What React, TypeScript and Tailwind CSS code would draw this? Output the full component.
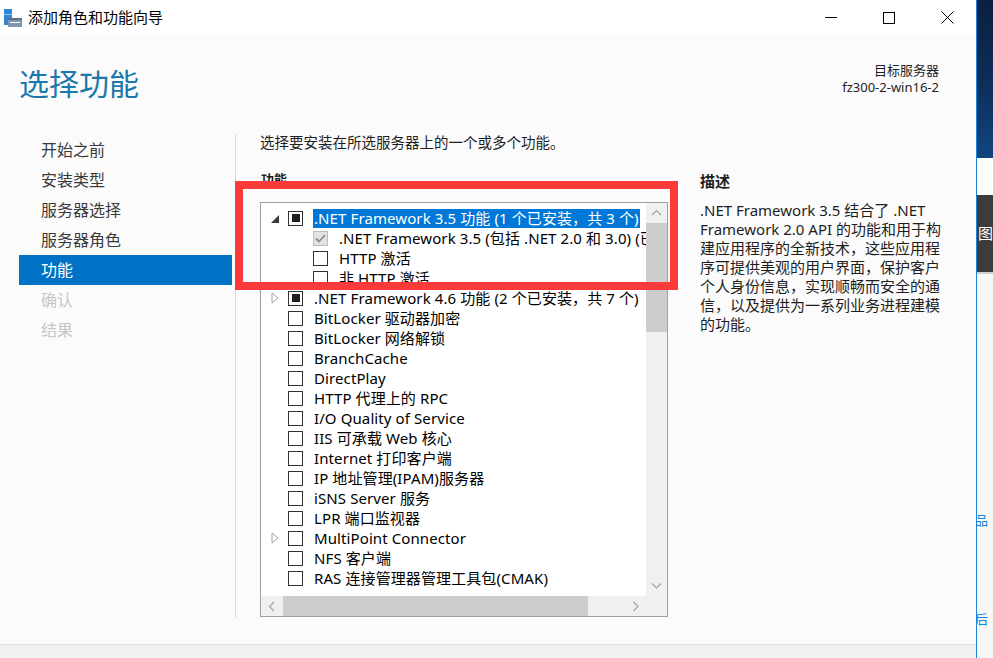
import React from "react";

type Row = {
  level: number;
  exp?: "open" | "closed";
  cb: "ind" | "dis" | "none";
  text: string;
  sel?: boolean;
};

const rows: Row[] = [
  { level: 0, exp: "open", cb: "ind", text: ".NET Framework 3.5 功能 (1 个已安装，共 3 个)", sel: true },
  { level: 1, cb: "dis", text: ".NET Framework 3.5 (包括 .NET 2.0 和 3.0) (已安装)" },
  { level: 1, cb: "none", text: "HTTP 激活" },
  { level: 1, cb: "none", text: "非 HTTP 激活" },
  { level: 0, exp: "closed", cb: "ind", text: ".NET Framework 4.6 功能 (2 个已安装，共 7 个)" },
  { level: 0, cb: "none", text: "BitLocker 驱动器加密" },
  { level: 0, cb: "none", text: "BitLocker 网络解锁" },
  { level: 0, cb: "none", text: "BranchCache" },
  { level: 0, cb: "none", text: "DirectPlay" },
  { level: 0, cb: "none", text: "HTTP 代理上的 RPC" },
  { level: 0, cb: "none", text: "I/O Quality of Service" },
  { level: 0, cb: "none", text: "IIS 可承载 Web 核心" },
  { level: 0, cb: "none", text: "Internet 打印客户端" },
  { level: 0, cb: "none", text: "IP 地址管理(IPAM)服务器" },
  { level: 0, cb: "none", text: "iSNS Server 服务" },
  { level: 0, cb: "none", text: "LPR 端口监视器" },
  { level: 0, exp: "closed", cb: "none", text: "MultiPoint Connector" },
  { level: 0, cb: "none", text: "NFS 客户端" },
  { level: 0, cb: "none", text: "RAS 连接管理器管理工具包(CMAK)" },
];

const navItems = [
  { t: "开始之前", s: "n" },
  { t: "安装类型", s: "n" },
  { t: "服务器选择", s: "n" },
  { t: "服务器角色", s: "n" },
  { t: "功能", s: "a" },
  { t: "确认", s: "d" },
  { t: "结果", s: "d" },
];

const descLines = [
  ".NET Framework 3.5 结合了 .NET",
  "Framework 2.0 API 的功能和用于构",
  "建应用程序的全新技术，这些应用程",
  "序可提供美观的用户界面，保护客户",
  "个人身份信息，实现顺畅而安全的通",
  "信，以及提供为一系列业务进程建模",
  "的功能。",
];

function Checkbox({ kind }: { kind: Row["cb"] }) {
  if (kind === "dis") {
    return (
      <div className="w-[15px] h-[15px] shrink-0 border border-[#bcbcbc] bg-[#e3e3e3] flex items-center justify-center">
        <svg width="11" height="9" viewBox="0 0 11 9">
          <polyline points="1,4.5 4,7.5 10,1" fill="none" stroke="#8c8c8c" strokeWidth="1.8" />
        </svg>
      </div>
    );
  }
  return (
    <div className="w-[15px] h-[15px] shrink-0 border border-[#333333] bg-white flex items-center justify-center">
      {kind === "ind" && <div className="w-[8px] h-[8px] bg-[#1e1e1e]" />}
    </div>
  );
}

function Expander({ exp }: { exp?: Row["exp"] }) {
  return (
    <div className="w-[20px] h-[20px] shrink-0 flex items-center pl-[3px]">
      {exp === "open" && (
        <svg width="8" height="8" viewBox="0 0 8 8" className="mt-[1px]">
          <polygon points="8,0 8,8 0,8" fill="#3a3a3a" />
        </svg>
      )}
      {exp === "closed" && (
        <svg width="8" height="12" viewBox="0 0 8 12">
          <polygon points="1,1 7,6 1,11" fill="none" stroke="#a6a6a6" strokeWidth="1" />
        </svg>
      )}
    </div>
  );
}

function Chevron({ dir }: { dir: "up" | "down" | "left" | "right" }) {
  const pts =
    dir === "up"
      ? "1,6 5.5,1.5 10,6"
      : dir === "down"
      ? "1,1.5 5.5,6 10,1.5"
      : dir === "left"
      ? "6,1 1.5,5.5 6,10"
      : "1.5,1 6,5.5 1.5,10";
  const w = dir === "up" || dir === "down" ? 11 : 8;
  const h = dir === "up" || dir === "down" ? 8 : 11;
  return (
    <svg width={w} height={h} viewBox={`0 0 ${w} ${h}`}>
      <polyline points={pts} fill="none" stroke="#a3a3a3" strokeWidth="1.2" />
    </svg>
  );
}

export default function App() {
  const font = { fontFamily: '"Noto Sans", "Noto Sans CJK SC", sans-serif' };
  return (
    <div className="w-[993px] h-[658px] flex overflow-hidden relative bg-white" style={font}>
      {/* Window */}
      <div className="w-[977px] h-full flex flex-col border-r border-[#1883d7] shrink-0">
        {/* Title bar */}
        <div className="h-[35px] bg-white flex items-center shrink-0">
          <svg width="20" height="20" viewBox="0 0 20 20" className="ml-[3px]">
            <rect x="1" y="1" width="8" height="16" fill="#2f86d6" />
            <rect x="1" y="6" width="8" height="1" fill="#9fc8ef" />
            <rect x="5" y="10" width="14" height="9" fill="#8195ad" />
            <rect x="5" y="10" width="14" height="2" fill="#5e718a" />
            <rect x="7" y="14" width="10" height="1" fill="#ffffff" />
          </svg>
          <div className="ml-[5px] text-[15px] text-black leading-none">添加角色和功能向导</div>
          <div className="ml-auto flex h-full">
            <div className="w-[58px] h-full flex items-center justify-center">
              <div className="w-[12px] h-px bg-black" />
            </div>
            <div className="w-[58px] h-full flex items-center justify-center">
              <div className="w-[12px] h-[12px] border border-black" />
            </div>
            <div className="w-[58px] h-full flex items-center justify-center">
              <svg width="13" height="13" viewBox="0 0 13 13">
                <line x1="0.5" y1="0.5" x2="12.5" y2="12.5" stroke="#000" strokeWidth="1" />
                <line x1="12.5" y1="0.5" x2="0.5" y2="12.5" stroke="#000" strokeWidth="1" />
              </svg>
            </div>
          </div>
        </div>

        {/* Body */}
        <div className="flex-1 bg-[#fbfbfb] flex flex-col">
          {/* Header */}
          <div className="h-[99px] flex justify-between shrink-0">
            <div className="pl-[19px] pt-[31px] text-[30px] leading-[36px] text-[#1a78ad]">选择功能</div>
            <div className="pr-[37px] pt-[27px] text-right text-[13px] leading-[17px] text-[#1e1e1e]">
              <div>目标服务器</div>
              <div>fz300-2-win16-2</div>
            </div>
          </div>

          {/* Main */}
          <div className="flex h-[484px]">
            <div className="ml-[19px] w-[213px] flex flex-col pt-[1px]">
              {navItems.map((n) => (
                <div
                  key={n.t}
                  className={
                    "h-[30px] flex items-center pl-[22px] text-[16px] " +
                    (n.s === "a"
                      ? "bg-[#0072c6] text-white"
                      : n.s === "d"
                      ? "text-[#c6c6c6]"
                      : "text-[#3a3a3a]")
                  }
                >
                  {n.t}
                </div>
              ))}
            </div>
            <div className="ml-[3px] w-px bg-[#d9d9d9]" />
            <div className="pl-[24px] flex flex-col">
              <div className="h-[17px] leading-[17px] text-[14.5px] text-[#1e1e1e] whitespace-nowrap">
                选择要安装在所选服务器上的一个或多个功能。
              </div>
              <div className="flex">
                {/* Left column */}
                <div className="flex flex-col w-[408px]">
                  <div className="mt-[20px] pl-[1px] h-[16px] leading-[16px] text-[13px] font-bold text-[#1e1e1e]">功能</div>
                  <div className="mt-[15px] w-[408px] h-[415px] border border-[#a0a0a0] bg-white flex flex-col">
                    <div className="flex h-[393px]">
                      <div className="flex-1 overflow-hidden pt-[5px]">
                        {rows.map((r, i) => (
                          <div
                            key={i}
                            className={"h-[20px] flex items-center whitespace-nowrap " + (r.level === 1 ? "pl-[32px]" : "pl-[7px]")}
                          >
                            <Expander exp={r.exp} />
                            <Checkbox kind={r.cb} />
                            <span
                              className={
                                "ml-[10px] px-[1px] h-[19px] leading-[19px] text-[15px] tracking-[0.1px] " +
                                (r.sel ? "bg-[#0078d7] text-white" : "text-black")
                              }
                            >
                              {r.text}
                            </span>
                          </div>
                        ))}
                      </div>
                      <div className="w-[21px] bg-[#f0f0f0] flex flex-col">
                        <div className="h-[20px] flex items-center justify-center">
                          <Chevron dir="up" />
                        </div>
                        <div className="h-[109px] bg-[#cdcdcd]" />
                        <div className="flex-1" />
                        <div className="h-[20px] flex items-center justify-center">
                          <Chevron dir="down" />
                        </div>
                      </div>
                    </div>
                    <div className="h-[20px] flex bg-[#f0f0f0]">
                      <div className="w-[21px] flex items-center justify-center">
                        <Chevron dir="left" />
                      </div>
                      <div className="flex-1 flex">
                        <div className="ml-[1px] w-[305px] bg-[#cdcdcd]" />
                      </div>
                      <div className="w-[21px] flex items-center justify-center">
                        <Chevron dir="right" />
                      </div>
                      <div className="w-[21px]" />
                    </div>
                  </div>
                </div>
                {/* Description */}
                <div className="ml-[32px] flex flex-col">
                  <div className="mt-[21px] h-[18px] leading-[18px] text-[15px] font-bold text-[#1e1e1e]">描述</div>
                  <div className="mt-[11px] text-[15px] leading-[19px] text-[#1e1e1e] whitespace-nowrap">
                    {descLines.map((l) => (
                      <div key={l}>{l}</div>
                    ))}
                  </div>
                </div>
              </div>
            </div>
          </div>
          <div className="flex-1" />
        </div>

        {/* Footer */}
        <div className="h-[14px] bg-[#f0f0f0] border-t border-[#dedede] shrink-0" />
      </div>

      {/* Outside strip */}
      <div className="w-[16px] h-full flex flex-col overflow-hidden shrink-0">
        <div className="h-[158px] bg-gradient-to-b from-[#0b2040] via-[#0c2d58] to-[#11467f]" />
        <div className="h-[37px] bg-white" />
        <div className="h-[77px] bg-[#3c3c3c] flex items-center overflow-hidden">
          <span className="text-[15px] text-white leading-none ml-[1px] whitespace-nowrap">图</span>
        </div>
        <div className="h-[2px] bg-[#d0d0d0]" />
        <div className="flex-1 bg-[#f7f7f7] relative overflow-hidden">
          <div className="pt-[240px] text-[13px] leading-none text-[#1883d7] -ml-[2px]">品</div>
          <div className="pt-[86px] text-[13px] leading-none text-[#1883d7] -ml-[2px]">后</div>
        </div>
      </div>

      {/* Red annotation frame */}
      <div className="absolute left-[235px] top-[181px] w-[443px] h-[109px] border-[8px] border-[#fb3a3a] pointer-events-none" />
    </div>
  );
}
